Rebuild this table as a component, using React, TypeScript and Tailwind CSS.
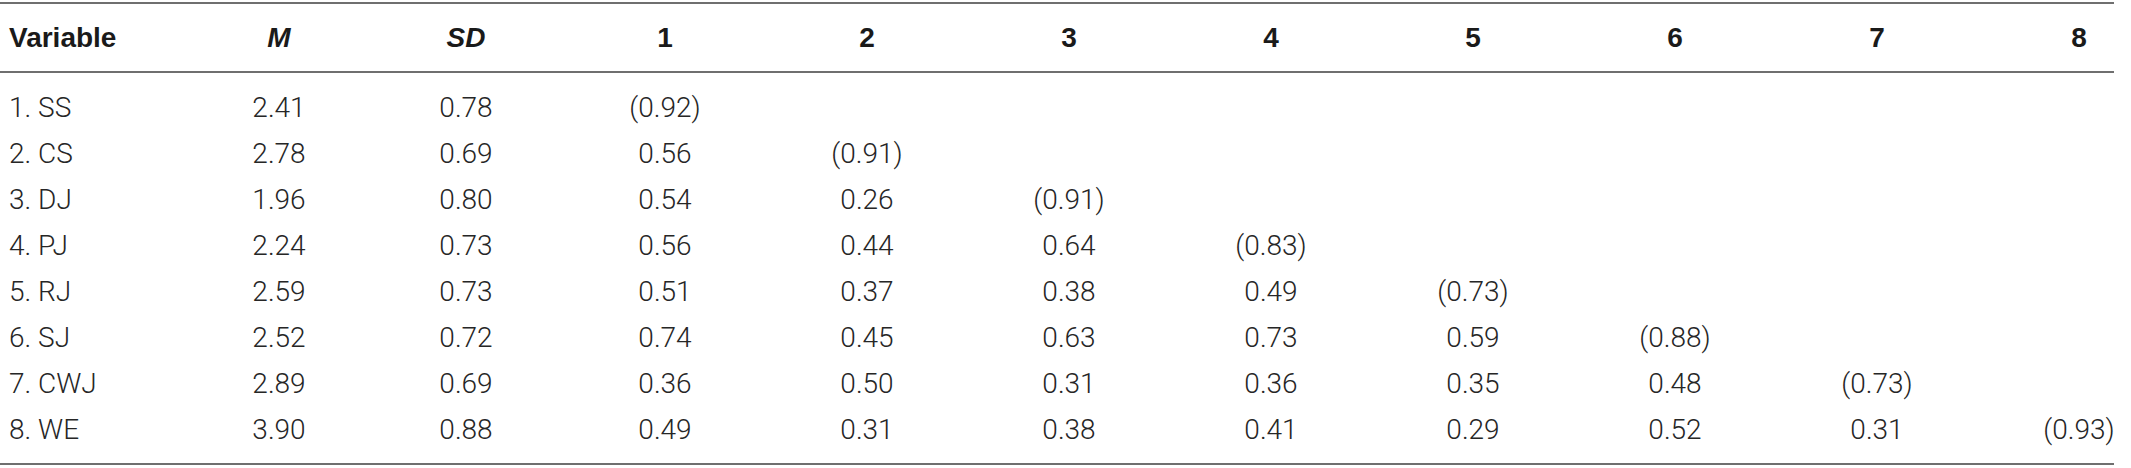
import React from "react";

const header = ["Variable", "M", "SD", "1", "2", "3", "4", "5", "6", "7", "8"];

const rows: string[][] = [
  ["1. SS", "2.41", "0.78", "(0.92)"],
  ["2. CS", "2.78", "0.69", "0.56", "(0.91)"],
  ["3. DJ", "1.96", "0.80", "0.54", "0.26", "(0.91)"],
  ["4. PJ", "2.24", "0.73", "0.56", "0.44", "0.64", "(0.83)"],
  ["5. RJ", "2.59", "0.73", "0.51", "0.37", "0.38", "0.49", "(0.73)"],
  ["6. SJ", "2.52", "0.72", "0.74", "0.45", "0.63", "0.73", "0.59", "(0.88)"],
  ["7. CWJ", "2.89", "0.69", "0.36", "0.50", "0.31", "0.36", "0.35", "0.48", "(0.73)"],
  ["8. WE", "3.90", "0.88", "0.49", "0.31", "0.38", "0.41", "0.29", "0.52", "0.31", "(0.93)"],
];

const grid = "grid grid-cols-[190px_178px_196px_repeat(8,202px)] w-[2180px]";

export default function App() {
  return (
    <div className="w-[2131px] h-[468px] overflow-hidden bg-white">
      <div className="w-[2114px]">
        <div className="mt-[2px] h-[2px] bg-[#6f6f6f]" />
        <div
          className={`${grid} h-[67px] items-center text-[28px] font-bold text-[#1a1a1a]`}
          style={{ fontFamily: '"Liberation Sans", Arial, sans-serif' }}
        >
          {header.map((h, i) => (
            <div
              key={i}
              className={i === 0 ? "pl-[9px] text-left" : i <= 2 ? "text-center italic" : "text-center"}
            >
              {h}
            </div>
          ))}
        </div>
        <div className="h-[2px] bg-[#6f6f6f]" />
        <div
          className="pt-[12px] pb-[10px] text-[28px] font-light text-[#262626]"
          style={{ fontFamily: 'Roboto, "Liberation Sans", sans-serif' }}
        >
          {rows.map((r, ri) => (
            <div key={ri} className={`${grid} h-[46px] items-center`}>
              {header.map((_, ci) => (
                <div key={ci} className={ci === 0 ? "pl-[9px] text-left" : "text-center"}>
                  {r[ci] ?? ""}
                </div>
              ))}
            </div>
          ))}
        </div>
        <div className="h-[2px] bg-[#6f6f6f]" />
      </div>
    </div>
  );
}
